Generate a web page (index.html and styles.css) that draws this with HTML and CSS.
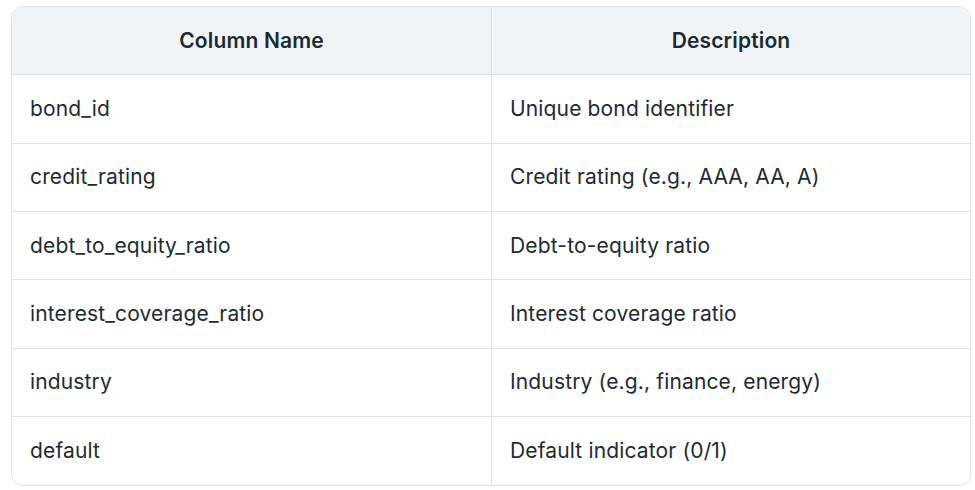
FILE: index.html
```html
<!DOCTYPE html>
<html lang="en">
<head>
<meta charset="utf-8">
<title>Columns</title>
<link rel="stylesheet" href="styles.css">
</head>
<body>
<div class="wrap">
  <table class="cols">
    <thead>
      <tr><th>Column Name</th><th>Description</th></tr>
    </thead>
    <tbody>
      <tr><td>bond_id</td><td>Unique bond identifier</td></tr>
      <tr><td>credit_rating</td><td>Credit rating (e.g., AAA, AA, A)</td></tr>
      <tr><td>debt_to_equity_ratio</td><td>Debt-to-equity ratio</td></tr>
      <tr><td>interest_coverage_ratio</td><td>Interest coverage ratio</td></tr>
      <tr><td>industry</td><td>Industry (e.g., finance, energy)</td></tr>
      <tr><td>default</td><td>Default indicator (0/1)</td></tr>
    </tbody>
  </table>
</div>
</body>
</html>
```
FILE: styles.css
```css
html, body {
  margin: 0;
  padding: 0;
  background: #ffffff;
}
.wrap {
  padding: 6px 0 0 11px;
}
.cols {
  width: 960px;
  table-layout: fixed;
  border-collapse: separate;
  border-spacing: 0;
  border: 1px solid #dde1e6;
  border-radius: 12px;
  overflow: hidden;
  font-family: Inter, "Noto Sans", sans-serif;
  font-size: 21px;
  letter-spacing: 0.15px;
  color: #1c2b33;
}
.cols th,
.cols td {
  height: 68.33px;
  box-sizing: border-box;
  padding: 0 18px;
  vertical-align: middle;
  border-bottom: 1px solid #dde1e6;
  line-height: 28px;
}
.cols th:first-child,
.cols td:first-child {
  width: 480px;
  border-right: 1px solid #dde1e6;
}
.cols tbody tr:last-child td {
  border-bottom: none;
}
.cols th {
  background: #f1f4f7;
  font-weight: 600;
  text-align: center;
}
.cols td {
  text-align: left;
}
```
